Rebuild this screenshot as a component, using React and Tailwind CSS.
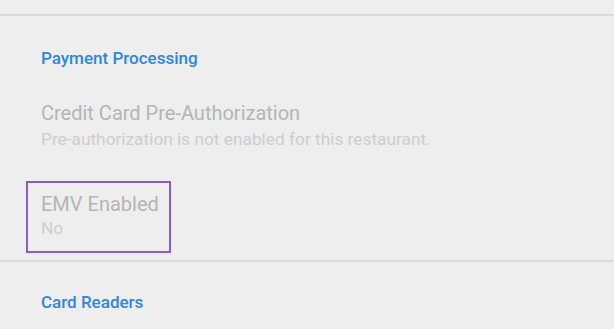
export default function App() {
  return (
    <div
      className="w-[614px] h-[329px] overflow-hidden bg-[#eeeeee]"
      style={{ fontFamily: "Roboto, 'Noto Sans', sans-serif" }}
    >
      <div className="h-[14px]" />
      <div className="border-t-2 border-[#d9d9d9]" />

      <div className="pl-[41px] pt-[31px]">
        <h2 className="text-[17px] leading-[22px] font-medium text-[#2b87e3]">
          Payment Processing
        </h2>

        <div className="mt-[32px]">
          <div className="text-[20px] leading-[24px] text-[#b5b5b5]">
            Credit Card Pre-Authorization
          </div>
          <div className="text-[17.3px] leading-[20px] mt-[4px] text-[#cdcdcd]">
            Pre-authorization is not enabled for this restaurant.
          </div>
        </div>
      </div>

      <div className="pl-[26px] pt-[32px]">
        <div className="w-[145px] h-[72px] border-2 border-[#8b5cc9] pl-[13px] pt-[9px]">
          <div className="text-[20px] leading-[24px] text-[#b5b5b5]">
            EMV Enabled
          </div>
          <div className="text-[17.3px] leading-[20px] mt-[2px] text-[#cdcdcd]">
            No
          </div>
        </div>
      </div>

      <div className="mt-[7px] border-t-2 border-[#d9d9d9]" />

      <div className="pl-[41px] pt-[29px]">
        <h2 className="text-[17px] leading-[22px] font-medium text-[#2b87e3]">
          Card Readers
        </h2>
      </div>
    </div>
  );
}
